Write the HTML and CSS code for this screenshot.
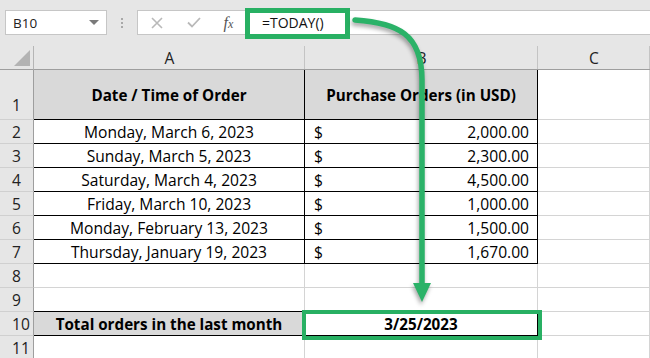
FILE: index.html
```html
<!DOCTYPE html>
<html lang="en">
<head>
  <meta charset="UTF-8">
  <title>TODAY function</title>
  <link rel="stylesheet" href="styles.css">
</head>
<body>
  <div class="app">
    <div class="toolbar">
      <div class="namebox"><span>B10</span><span class="caret"></span></div>
      <div class="grip"><i></i><i></i><i></i></div>
      <div class="formula">
        <div class="fbtn">
          <svg width="12" height="12" viewBox="0 0 12 12"><path d="M1 1L11 11M11 1L1 11" stroke="#b9b9b9" stroke-width="1.6"/></svg>
        </div>
        <div class="fbtn">
          <svg width="14" height="11" viewBox="0 0 14 11"><path d="M1 5.5L5 9.5L13 1" fill="none" stroke="#b9b9b9" stroke-width="1.8"/></svg>
        </div>
        <div class="fbtn fx"><span>f</span><span class="x">x</span></div>
        <div class="finput">=TODAY()</div>
      </div>
    </div>

    <div class="sheet">
      <div class="corner"><span class="tri"></span></div>
      <div class="colhead">A</div>
      <div class="colhead">B</div>
      <div class="colhead">C</div>

      <div class="rowhead tall">1</div>
      <div class="cell t fill bold center">Date / Time of Order</div>
      <div class="cell t fill bold center">Purchase Orders (in USD)</div>
      <div class="cell"></div>

      <div class="rowhead">2</div>
      <div class="cell t center">Monday, March 6, 2023</div>
      <div class="cell t money"><span>$</span><span>2,000.00</span></div>
      <div class="cell"></div>

      <div class="rowhead">3</div>
      <div class="cell t center">Sunday, March 5, 2023</div>
      <div class="cell t money"><span>$</span><span>2,300.00</span></div>
      <div class="cell"></div>

      <div class="rowhead">4</div>
      <div class="cell t center">Saturday, March 4, 2023</div>
      <div class="cell t money"><span>$</span><span>4,500.00</span></div>
      <div class="cell"></div>

      <div class="rowhead">5</div>
      <div class="cell t center">Friday, March 10, 2023</div>
      <div class="cell t money"><span>$</span><span>1,000.00</span></div>
      <div class="cell"></div>

      <div class="rowhead">6</div>
      <div class="cell t center">Monday, February 13, 2023</div>
      <div class="cell t money"><span>$</span><span>1,500.00</span></div>
      <div class="cell"></div>

      <div class="rowhead">7</div>
      <div class="cell t center">Thursday, January 19, 2023</div>
      <div class="cell t money"><span>$</span><span>1,670.00</span></div>
      <div class="cell"></div>

      <div class="rowhead">8</div>
      <div class="cell"></div>
      <div class="cell"></div>
      <div class="cell"></div>

      <div class="rowhead">9</div>
      <div class="cell under"></div>
      <div class="cell under"></div>
      <div class="cell"></div>

      <div class="rowhead">10</div>
      <div class="cell t fill bold center">Total orders in the last month</div>
      <div class="cell t bold center">3/25/2023</div>
      <div class="cell"></div>

      <div class="rowhead">11</div>
      <div class="cell"></div>
      <div class="cell"></div>
      <div class="cell"></div>
    </div>

    <!-- annotation overlays -->
    <div class="hl hl-formula"></div>
    <div class="hl hl-cell"></div>
    <svg class="arrow" width="650" height="358" viewBox="0 0 650 358">
      <path d="M355 20C398 23 422 34 422 80L422 286" fill="none" stroke="#2bb268" stroke-width="5.5" stroke-linecap="round"/>
      <polygon points="413,283 431,283 422,302" fill="#2bb268"/>
    </svg>
  </div>
</body>
</html>
```

FILE: styles.css
```css
body {
  margin: 0;
  background: #fff;
  font-family: "Open Sans", "Noto Sans", sans-serif;
  font-size: 15.6px;
  color: #000;
}

.app {
  position: relative;
  width: 650px;
  height: 358px;
  overflow: hidden;
}

/* formula bar */
.toolbar {
  height: 46px;
  box-sizing: border-box;
  padding-top: 10px;
  display: flex;
  align-items: flex-start;
  background: #e6e6e6;
}

.namebox {
  width: 102px;
  height: 25px;
  margin-left: 5px;
  box-sizing: border-box;
  padding: 0 7px 0 7px;
  display: flex;
  align-items: center;
  justify-content: space-between;
  background: #fff;
  border: 1px solid #c6c6c6;
  font-size: 13.5px;
  color: #222;
}

.caret {
  width: 0;
  height: 0;
  border-left: 5px solid transparent;
  border-right: 5px solid transparent;
  border-top: 5px solid #7a7a7a;
}

.grip {
  width: 30px;
  padding-top: 8px;
  display: flex;
  flex-direction: column;
  align-items: center;
  gap: 2px;
}

.grip i {
  width: 2px;
  height: 2px;
  background: #a8a8a8;
}

.formula {
  flex: 1;
  height: 25px;
  box-sizing: border-box;
  display: flex;
  align-items: center;
  background: #fff;
  border: 1px solid #c6c6c6;
  border-right: none;
}

.fbtn {
  width: 37px;
  display: flex;
  align-items: center;
  justify-content: center;
}

.fx {
  width: 33px;
  font-family: "Liberation Serif", serif;
  font-style: italic;
  font-size: 16px;
  color: #555;
}

.fx .x {
  font-size: 12px;
  margin-top: 4px;
}

.finput {
  padding-left: 17px;
  font-size: 14px;
  color: #111;
}

/* sheet */
.sheet {
  display: grid;
  grid-template-columns: 34px 271px 233px 112px;
  grid-template-rows: 24px 50px repeat(11, 24px);
}

.corner {
  background: #e6e6e6;
  border-right: 1px solid #b5b5b5;
  border-bottom: 1px solid #9e9e9e;
  box-sizing: border-box;
  display: flex;
  align-items: flex-end;
  justify-content: flex-end;
  padding: 0 3px 3px 0;
}

.tri {
  width: 0;
  height: 0;
  border-left: 16px solid transparent;
  border-bottom: 16px solid #b3b3b3;
}

.colhead {
  box-sizing: border-box;
  display: flex;
  align-items: center;
  justify-content: center;
  background: linear-gradient(#c4c4c4, #c4c4c4) right bottom / 1px 100% no-repeat, #e6e6e6;
  border-bottom: 1px solid #9e9e9e;
  color: #222;
}

.rowhead {
  box-sizing: border-box;
  display: flex;
  align-items: center;
  padding-left: 12px;
  background: #e6e6e6;
  border-right: 1px solid #9e9e9e;
  border-bottom: 1px solid #d0d0d0;
  color: #222;
}

.rowhead.tall {
  align-items: flex-end;
  padding-bottom: 3px;
}

.cell {
  box-sizing: border-box;
  display: flex;
  align-items: center;
  border-right: 1px solid #d4d4d4;
  border-bottom: 1px solid #d4d4d4;
}

.cell.t {
  border-right-color: #000;
  border-bottom-color: #000;
}

.cell.under {
  border-bottom-color: #000;
}

.fill {
  background: #d9d9d9;
}

.bold {
  font-weight: 700;
  font-size: 15.2px;
}

.center {
  justify-content: center;
}

.money {
  justify-content: space-between;
  padding: 0 8px 0 9px;
}

/* annotations */
.hl {
  position: absolute;
  box-sizing: border-box;
  border: 4px solid #28b063;
}

.hl-formula {
  left: 245px;
  top: 8px;
  width: 105px;
  height: 31px;
  border-width: 5px;
}

.hl-cell {
  left: 302px;
  top: 310px;
  width: 240px;
  height: 30px;
}

.arrow {
  position: absolute;
  left: 0;
  top: 0;
  pointer-events: none;
  filter: drop-shadow(-1px 3px 2px rgba(0, 0, 0, 0.35));
}
```
